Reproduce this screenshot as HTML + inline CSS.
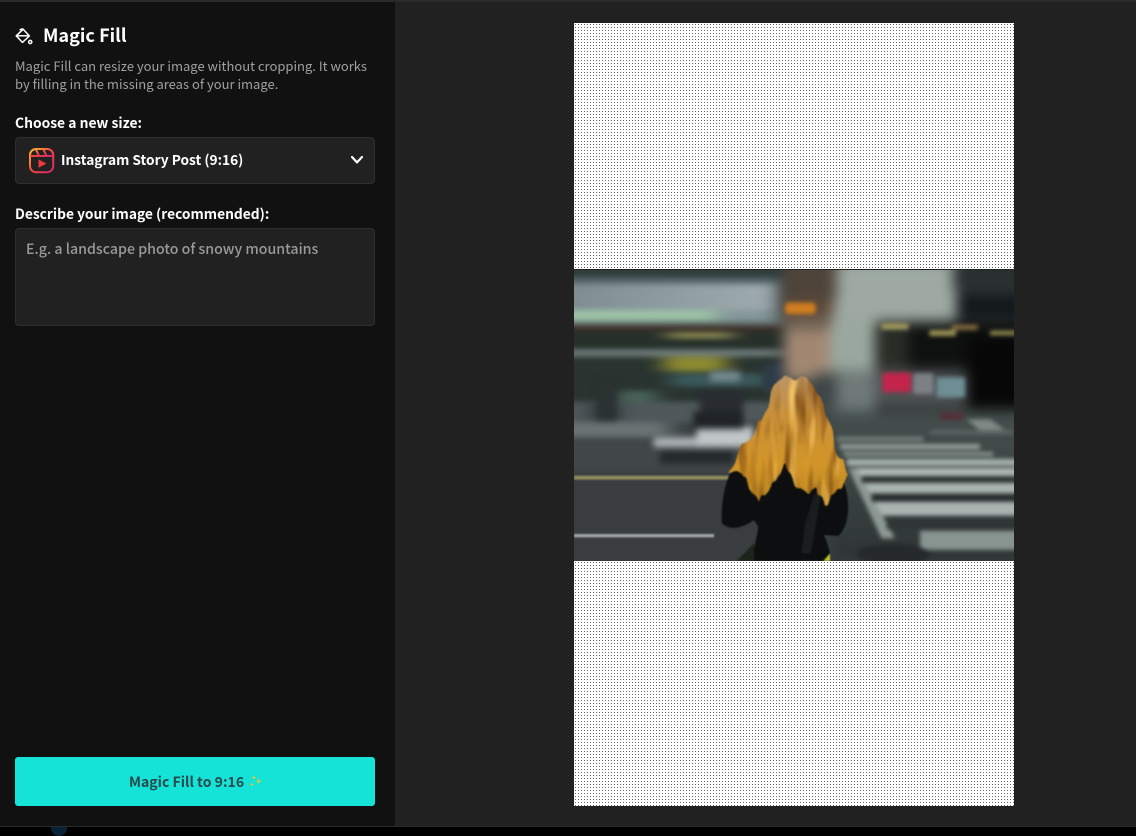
<!DOCTYPE html>
<html><head><meta charset="utf-8">
<style>
html,body{margin:0;padding:0;background:#000;}
body{width:1136px;height:836px;position:relative;overflow:hidden;font-family:"Noto Sans CJK JP","Liberation Sans",sans-serif;}
.a{position:absolute;white-space:nowrap;}
.dots{position:absolute;left:574px;width:440px;background-color:#fff;background-image:radial-gradient(circle at 1.5px 1.5px,#666 0,#666 .7px,transparent .75px);background-size:3px 3px;background-repeat:repeat;}
</style></head><body>
<div class="a" style="left:0;top:0;width:1136px;height:2px;background:#2a2a2a"></div>
<div class="a" style="left:0;top:2px;width:395px;height:824px;background:#111"></div>
<div class="a" style="left:395px;top:2px;width:741px;height:824px;background:#212121"></div>
<div class="a" style="left:0;top:826px;width:1136px;height:1px;background:#2a2a2a"></div>
<div class="a" style="left:51px;top:827px;width:16px;height:9px;border-radius:0 0 8px 8px;background:#0a2238"></div>

<svg class="a" style="left:15px;top:27px" width="18" height="18" viewBox="0 0 18 18" fill="none" stroke="#fff" stroke-width="1.5"><path d="M4.6 3 L7.6 1.6 M8.2 2.2 L14.4 9 L7.4 15.4 L1.2 8.8 Z" stroke-linejoin="round"/><path d="M1.6 8.8 H14" /><circle cx="15.2" cy="15" r="1.6"/></svg>
<div class="a" style="left:43px;top:23px;font-size:18.1px;line-height:25px;font-weight:700;color:#fff">Magic Fill</div>
<div class="a" style="left:15px;top:57px;font-size:13px;line-height:18px;color:#a0a0a0">Magic Fill can resize your image without cropping. It works<br>by filling in the missing areas of your image.</div>
<div class="a" style="left:15px;top:112px;font-size:13.85px;line-height:20px;font-weight:700;color:#fff">Choose a new size:</div>

<div class="a" style="left:15px;top:137px;width:358px;height:45px;background:#212121;border:1px solid #2e2e2e;border-radius:4px"></div>
<svg class="a" style="left:28px;top:147px" width="27" height="27" viewBox="0 0 27 27" fill="none">
<defs><linearGradient id="g" x1="0" y1="0" x2="1" y2="1"><stop offset="0" stop-color="#fdb92e"/><stop offset=".5" stop-color="#f4473f"/><stop offset="1" stop-color="#d6246e"/></linearGradient></defs>
<rect x="2" y="2" width="23.2" height="23.2" rx="6" stroke="url(#g)" stroke-width="2"/>
<path d="M2 9 H25 M8 2.5 L11 9 M15.5 2.5 L18.5 9" stroke="url(#g)" stroke-width="2"/>
<path d="M10.5 12.4 L18.4 16.6 L10.5 20.8 Z" fill="#ee3a3a"/></svg>
<div class="a" style="left:61px;top:149px;font-size:13.7px;line-height:20px;font-weight:700;color:#fff">Instagram Story Post (9:16)</div>
<svg class="a" style="left:350px;top:155px" width="14" height="10" viewBox="0 0 14 10" fill="none" stroke="#fff" stroke-width="2.2" stroke-linecap="round" stroke-linejoin="round"><path d="M2 2 L7 7.4 L12 2"/></svg>

<div class="a" style="left:15px;top:203px;font-size:13.78px;line-height:20px;font-weight:700;color:#fff">Describe your image (recommended):</div>
<div class="a" style="left:15px;top:228px;width:358px;height:96px;background:#212121;border:1px solid #2e2e2e;border-radius:4px"></div>
<div class="a" style="left:26px;top:239px;font-size:14.2px;line-height:20px;font-weight:500;color:#9a9a9a">E.g. a landscape photo of snowy mountains</div>

<div class="a" style="left:15px;top:757px;width:360px;height:49px;background:#16e3d8;border-radius:3px"></div>
<div class="a" style="left:129px;top:772px;font-size:14.05px;line-height:20px;font-weight:700;color:#274a4b">Magic Fill to 9:16</div>
<svg class="a" style="left:249px;top:775px" width="14" height="14" viewBox="0 0 14 14" fill="#f9c21e"><path d="M5 0 L5.6 2 L7.4 2.6 L5.6 3.2 L5 5 L4.4 3.2 L2.6 2.6 L4.4 2 Z"/><path d="M9.6 3.2 L10.3 5.5 L12.6 6.2 L10.3 6.9 L9.6 9.2 L8.9 6.9 L6.6 6.2 L8.9 5.5 Z"/><path d="M3 7.4 L3.5 9 L5.1 9.5 L3.5 10 L3 11.6 L2.5 10 L.9 9.5 L2.5 9 Z"/></svg>

<div class="dots" style="top:23px;height:246px"></div>
<div class="dots" style="top:561px;height:245px"></div>

<svg class="a" style="left:574px;top:270px" width="440" height="291" viewBox="12 30 1320 873" preserveAspectRatio="none">
<defs>
<clipPath id="c"><rect x="12" y="30" width="1320" height="873"/></clipPath>
<filter id="mot" filterUnits="userSpaceOnUse" x="-200" y="-100" width="1800" height="1200" color-interpolation-filters="sRGB"><feGaussianBlur stdDeviation="32 9"/></filter>
<filter id="b12" filterUnits="userSpaceOnUse" x="-200" y="-100" width="1800" height="1200" color-interpolation-filters="sRGB"><feGaussianBlur stdDeviation="20"/></filter>
<filter id="b8" filterUnits="userSpaceOnUse" x="-200" y="-100" width="1800" height="1200" color-interpolation-filters="sRGB"><feGaussianBlur stdDeviation="10"/></filter>
<filter id="b4" filterUnits="userSpaceOnUse" x="-200" y="-100" width="1800" height="1200" color-interpolation-filters="sRGB"><feGaussianBlur stdDeviation="6"/></filter>
<filter id="b2" filterUnits="userSpaceOnUse" x="-200" y="-100" width="1800" height="1200" color-interpolation-filters="sRGB"><feGaussianBlur stdDeviation="2.4"/></filter>
<filter id="hair" filterUnits="userSpaceOnUse" x="380" y="300" width="560" height="520" color-interpolation-filters="sRGB">
 <feTurbulence type="fractalNoise" baseFrequency="0.035 0.006" numOctaves="2" seed="11" result="n"/>
 <feDisplacementMap in="SourceGraphic" in2="n" scale="34" xChannelSelector="R" yChannelSelector="G" result="d"/>
 <feColorMatrix in="n" type="matrix" values="0 0 0 0 .5  0 0 0 0 .3  0 0 0 0 .08  2.4 0 0 0 -1.05" result="dk0"/>
 <feComposite in="dk0" in2="d" operator="in" result="dk"/>
 <feColorMatrix in="n" type="matrix" values="0 0 0 0 .98  0 0 0 0 .8  0 0 0 0 .4  0 -2.6 0 0 1.2" result="lt0"/>
 <feComposite in="lt0" in2="d" operator="in" result="lt"/>
 <feMerge result="m"><feMergeNode in="d"/><feMergeNode in="dk"/><feMergeNode in="lt"/></feMerge>
 <feGaussianBlur in="m" stdDeviation="2"/>
</filter>
<linearGradient id="lg" x1="0" x2="1" y1="0" y2="0"><stop offset="0" stop-color="#7a878b"/><stop offset="1" stop-color="#9fadb0"/></linearGradient>
<linearGradient id="ha" x1="0" x2="0" y1="0" y2="1"><stop offset="0" stop-color="#bb9468"/><stop offset=".3" stop-color="#c88f38"/><stop offset=".7" stop-color="#d29528"/><stop offset="1" stop-color="#b98620"/></linearGradient>
<linearGradient id="cw" x1="0" x2="0" y1="0" y2="1"><stop offset="0" stop-color="#45504e"/><stop offset="1" stop-color="#2e3434"/></linearGradient>
</defs>
<g clip-path="url(#c)">
<rect x="12" y="30" width="1320" height="873" fill="#3b4243"/>
<g filter="url(#mot)">
<rect x="-100" y="0" width="760" height="52" fill="#2f3d3c"/>
<rect x="-100" y="52" width="740" height="20" fill="#57666a"/>
<rect x="-100" y="72" width="725" height="80" fill="url(#lg)"/>
<rect x="-100" y="150" width="540" height="34" fill="#9cc2a6"/>
<rect x="440" y="150" width="190" height="34" fill="#85979a"/>
<rect x="-100" y="184" width="740" height="16" fill="#5f6e6c"/>
<rect x="-100" y="198" width="750" height="12" fill="#422a22"/>
<rect x="-100" y="210" width="750" height="60" fill="#262f2a"/>
<rect x="290" y="218" width="200" height="16" fill="#9a9858"/>
<rect x="-100" y="268" width="740" height="22" fill="#6f7c7a"/>
<rect x="-100" y="290" width="750" height="135" fill="#29332f"/>
<rect x="280" y="290" width="190" height="44" fill="#8c8a30"/>
<rect x="300" y="340" width="300" height="40" fill="#3a585a"/>
<rect x="140" y="392" width="120" height="34" fill="#486459"/>
<rect x="-100" y="425" width="740" height="62" fill="#4f585a"/>
<rect x="60" y="430" width="90" height="50" fill="#333b3d"/>
<rect x="-100" y="487" width="400" height="45" fill="#6b7274"/>
<rect x="-100" y="532" width="760" height="105" fill="#414749"/>
<rect x="-100" y="637" width="760" height="290" fill="#393d3f"/>
</g>
<g filter="url(#b8)">
<rect x="250" y="532" width="300" height="30" rx="10" fill="#b0b6b9"/>
<rect x="380" y="500" width="170" height="60" fill="#c0c5c7"/>
<rect x="370" y="455" width="150" height="52" fill="#1f2326"/>
<rect x="390" y="395" width="130" height="60" fill="#282c31"/>
<rect x="420" y="335" width="90" height="28" fill="#7a8d93"/>
<rect x="270" y="570" width="220" height="42" fill="#25292b"/>
<rect x="580" y="310" width="70" height="90" fill="#2e3c48"/>
<rect x="80" y="360" width="60" height="120" fill="#2a3232"/>
</g>
<g filter="url(#b12)">
<rect x="790" y="0" width="370" height="190" fill="#9da9a2"/>
<rect x="1150" y="0" width="240" height="90" fill="#2a2f30"/>
<rect x="1160" y="100" width="220" height="75" fill="#14181b"/>
<rect x="640" y="0" width="160" height="120" fill="#4f4439"/>
<rect x="640" y="118" width="150" height="50" fill="#5e4a3a"/>
<rect x="640" y="165" width="150" height="50" fill="#6d5f50"/>
<rect x="645" y="210" width="145" height="150" fill="#a28873"/>
<rect x="780" y="180" width="140" height="150" fill="#9aa79f"/>
<rect x="780" y="330" width="140" height="130" fill="#6f7a78"/>
<rect x="915" y="185" width="470" height="265" fill="#0f1110"/>
<rect x="915" y="190" width="100" height="240" fill="#2a2c26"/>
<rect x="915" y="330" width="280" height="110" fill="#505455"/>
<rect x="1190" y="230" width="200" height="220" fill="#070707"/>
<rect x="730" y="340" width="70" height="100" fill="#3e4647"/>
<rect x="780" y="450" width="600" height="460" fill="url(#cw)"/>
</g>
<g filter="url(#b4)">
<rect x="645" y="128" width="92" height="34" rx="10" fill="#d07c1f"/>
<rect x="935" y="190" width="80" height="18" fill="#a39b5e"/>
<rect x="1078" y="210" width="80" height="18" fill="#9a9254"/>
<rect x="1145" y="194" width="78" height="16" fill="#80683c"/>
<rect x="1260" y="212" width="80" height="14" fill="#8e8850"/>
<rect x="938" y="338" width="85" height="58" fill="#c4244c"/>
<rect x="1030" y="340" width="60" height="62" fill="#7d8187"/>
<rect x="1100" y="352" width="85" height="60" fill="#6d8e94"/>
<rect x="1110" y="455" width="70" height="25" fill="#53323c"/>
<path d="M1190 478 L1260 478 L1320 520 L1240 520 Z" fill="#7f8a86"/>
<rect x="800" y="530" width="260" height="14" fill="#737d79"/>
<rect x="1080" y="510" width="250" height="14" fill="#5a6462"/>
<rect x="810" y="552" width="420" height="16" fill="#929d98"/>
<rect x="820" y="576" width="450" height="12" fill="#8a9591"/>
<rect x="830" y="597" width="520" height="20" fill="#a8b3ae"/>
<rect x="850" y="624" width="500" height="24" fill="#aeb9b4"/>
<rect x="880" y="668" width="470" height="32" fill="#a9b4b0"/>
<rect x="910" y="725" width="440" height="42" fill="#a9b4b0"/>
<rect x="1050" y="812" width="300" height="58" fill="#87948f"/>
<path d="M835 625 L860 625 L975 835 L935 835 Z" fill="#8d9995"/>
<rect x="875" y="650" width="470" height="18" fill="#2a3030"/>
<rect x="905" y="703" width="440" height="22" fill="#272c2d"/>
<rect x="950" y="770" width="400" height="38" fill="#303536"/>
<ellipse cx="970" cy="882" rx="110" ry="30" fill="#25292b"/>
</g>
<g filter="url(#b2)">
<rect x="12" y="647" width="470" height="12" fill="#8f8a5e"/>
<rect x="12" y="822" width="420" height="10" fill="#9ea5a3"/>
<path d="M480 640 C462 680 452 740 456 790 C480 812 515 806 552 780 L565 800 C560 840 548 870 548 903 H780 C782 870 772 850 762 825 L805 828 C835 800 842 740 826 680 L800 610 L520 610 Z" fill="#0d0e0f"/>
<path d="M735 700 L752 705 L735 810 L722 880 L695 880 L705 790 Z" fill="#1a1d1d"/>
<path d="M552 850 L500 903 H552 Z" fill="#1d241c"/>
<path d="M760 903 L780 880 V903 Z" fill="#c4c82a"/>
</g>
<path filter="url(#hair)" d="M660 350 C625 352 605 372 595 420 C585 470 560 510 530 550 C505 585 490 610 476 636 C505 628 520 640 528 662 C535 690 555 700 568 728 C590 690 615 665 640 625 C655 600 665 640 672 660 C682 690 700 690 722 704 C735 690 740 670 748 690 C755 705 765 715 770 732 C790 700 815 680 830 650 C815 600 800 570 790 530 C775 480 770 440 750 400 C735 368 705 350 660 350 Z" fill="url(#ha)"/>
</g>
</svg>
</body></html>
